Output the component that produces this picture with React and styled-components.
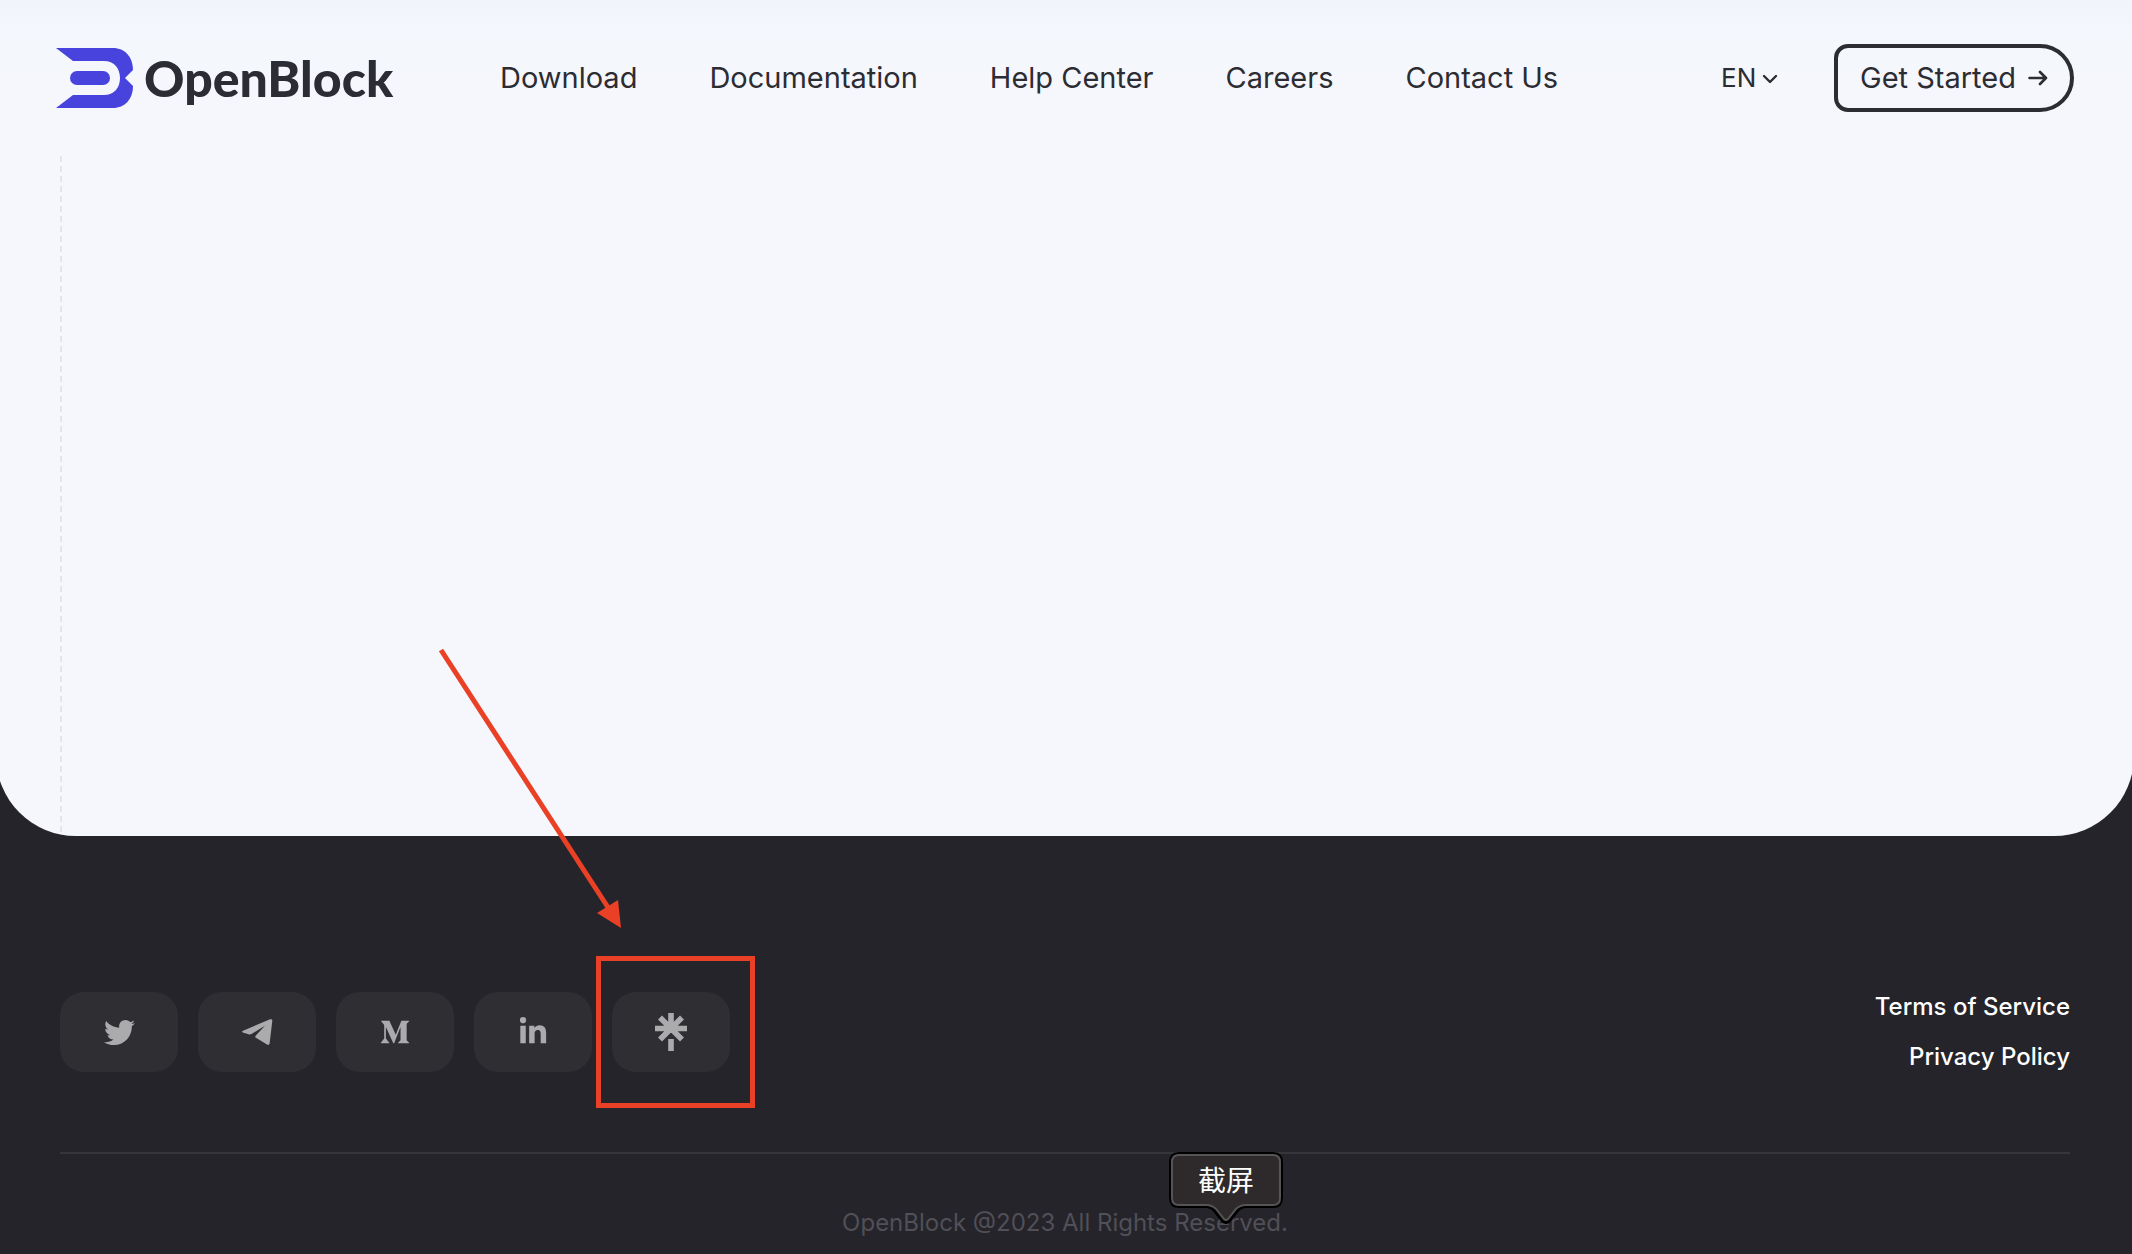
import React from 'react';
import styled, { createGlobalStyle } from 'styled-components';
import { FaTwitter, FaMediumM, FaLinkedinIn } from 'react-icons/fa';

const GlobalStyle = createGlobalStyle`
  * {
    box-sizing: border-box;
  }

  body {
    margin: 0;
    background: #25242a;
    color: #2c2c33;
    font-family: Inter, 'Noto Sans CJK SC', sans-serif;
  }
`;

const Page = styled.div`
  position: relative;
  display: flex;
  flex-direction: column;
  min-height: 100vh;
  overflow: hidden;
`;

const Panel = styled.div`
  flex: 1;
  display: flex;
  flex-direction: column;
  margin: 0 -2px 0 -4px;
  padding: 0 2px 0 4px;
  border-radius: 0 0 80px 80px;
  background: #f6f7fc;
  overflow: hidden;
`;

const Header = styled.header`
  display: flex;
  align-items: center;
  height: 156px;
  padding: 0 58px 0 56px;
  background: linear-gradient(#f1f4fa, #f4f7fc 40px, #f6f7fc 120px);
`;

const Logo = styled.a`
  display: flex;
  align-items: center;
  gap: 10px;
  width: 444px;
  color: #2c2c35;
  font-family: Lato, sans-serif;
  font-size: 50px;
  font-weight: 900;
  line-height: 60px;
  text-decoration: none;
`;

const Nav = styled.nav`
  display: flex;
  gap: 72px;
`;

const NavLink = styled.a`
  color: #2c2c33;
  font-size: 29px;
  line-height: 40px;
  text-decoration: none;
  white-space: nowrap;
`;

const Actions = styled.div`
  display: flex;
  align-items: center;
  gap: 56px;
  margin-left: auto;
`;

const Language = styled.label`
  display: flex;
  align-items: center;
`;

const LanguageSelect = styled.select`
  width: 58px;
  padding: 0;
  border: 0;
  appearance: none;
  background: transparent;
  color: #2c2c33;
  font-family: inherit;
  font-size: 26px;
  line-height: 40px;
`;

const Chevron = styled.svg`
  width: 16px;
  height: 10px;
  margin-left: -17px;
  margin-top: 2px;
  pointer-events: none;
`;

const StartButton = styled.button`
  display: flex;
  align-items: center;
  gap: 12px;
  height: 68px;
  padding: 0 22px;
  border: 4px solid #2c2c33;
  border-radius: 14px 34px 34px 14px;
  background: transparent;
  color: #2c2c33;
  font-family: inherit;
  font-size: 29px;
  line-height: 40px;
  white-space: nowrap;
`;

const Main = styled.main`
  flex: 1;
  display: flex;
  padding-left: 60px;
`;

const Guide = styled.div`
  width: 2px;
  background: repeating-linear-gradient(#e4e4ea 0 6px, transparent 6px 10px);
`;

const Footer = styled.footer`
  padding: 146px 62px 13px 60px;
`;

const FooterRow = styled.div`
  display: flex;
  align-items: center;
  justify-content: space-between;
`;

const Socials = styled.div`
  display: flex;
  gap: 20px;
`;

const SocialLink = styled.a`
  position: relative;
  display: flex;
  align-items: center;
  justify-content: center;
  width: 118px;
  height: 80px;
  border-radius: 24px;
  background: #2f2e33;
  color: #ababae;
  font-size: 30px;
`;

const Legal = styled.div`
  display: flex;
  flex-direction: column;
  align-items: flex-end;
`;

const LegalLink = styled.a`
  color: #fff;
  font-size: 24px;
  font-weight: 500;
  line-height: 50px;
  text-decoration: none;
`;

const Divider = styled.hr`
  height: 2px;
  margin: 70px 0 51px;
  border: 0;
  background: #36353b;
`;

const Copyright = styled.p`
  position: relative;
  width: fit-content;
  margin: 0 auto;
  color: #514f57;
  font-size: 24px;
  line-height: 36px;
`;

const Marker = styled.div`
  position: absolute;
  top: -36px;
  left: -16px;
  width: 159px;
  height: 152px;
  border: 5px solid #ea4025;
  pointer-events: none;
`;

const Arrow = styled.svg`
  position: absolute;
  top: -344px;
  left: -173px;
  width: 186px;
  height: 284px;
  pointer-events: none;
`;

const Tooltip = styled.div`
  position: absolute;
  right: 5px;
  bottom: 17px;
  width: 114px;
  height: 72px;
  color: #fff;
  font-family: 'Noto Sans CJK SC', sans-serif;
  font-size: 28px;
  line-height: 54px;
  text-align: center;
`;

const TooltipShape = styled.svg`
  position: absolute;
  inset: 0;
`;

const TooltipText = styled.span`
  position: relative;
`;

const LogoMark = () => (
  <svg width="78" height="60" viewBox="0 0 78 60" fill="#4843dc" aria-hidden="true">
    <path d="M0 0H57C69 0 77 9 77 22L69 30L77 38C77 51 69 60 57 60H0L17 47H48C58 47 64 40 64 30C64 20 58 13 48 13H17Z" />
    <rect x="14" y="23" width="40" height="14" rx="7" />
  </svg>
);

const RightArrow = () => (
  <svg width="20" height="16" viewBox="0 0 20 16" fill="none" stroke="currentColor" strokeWidth="2.6" strokeLinecap="round" strokeLinejoin="round" aria-hidden="true">
    <path d="M1.5 8H18M12 2L18 8L12 14" />
  </svg>
);

const TelegramIcon = () => (
  <svg width="31" height="27" viewBox="0 0 31 27" fill="currentColor" aria-hidden="true">
    <path d="M0.5 12L28 0.3Q30.6 -0.3 30.3 2L27.6 24.5Q27 26.5 25 25.6L13.5 18.5Q13 17.5 13.6 16.7L23 6.8L9.5 15Q8 15.8 6.5 15.3L0.8 13.5Q-0.3 12.7 0.5 12Z" />
  </svg>
);

const LinktreeIcon = () => (
  <svg width="32" height="38" viewBox="0 0 32 38" fill="none" stroke="currentColor" strokeWidth="5.6" aria-hidden="true">
    <path d="M16 0V20M0 15.5H32M5 4.5L16 15.5L27 4.5M5 26.5L16 15.5L27 26.5M16 26V38" />
  </svg>
);

const navItems = ['Download', 'Documentation', 'Help Center', 'Careers', 'Contact Us'];

const App = () => {
  return (
    <>
      <GlobalStyle />
      <Page>
        <Panel>
          <Header>
            <Logo href="#">
              <LogoMark />
              OpenBlock
            </Logo>
            <Nav>
              {navItems.map((item) => (
                <NavLink key={item} href="#">{item}</NavLink>
              ))}
            </Nav>
            <Actions>
              <Language>
                <LanguageSelect aria-label="Language" defaultValue="EN">
                  <option>EN</option>
                </LanguageSelect>
                <Chevron viewBox="0 0 16 10" fill="none" stroke="currentColor" strokeWidth="2.4" strokeLinecap="round" strokeLinejoin="round">
                  <path d="M2 2L8 8L14 2" />
                </Chevron>
              </Language>
              <StartButton type="button">
                Get Started
                <RightArrow />
              </StartButton>
            </Actions>
          </Header>
          <Main>
            <Guide />
          </Main>
        </Panel>
        <Footer>
          <FooterRow>
            <Socials>
              <SocialLink href="#" aria-label="Twitter"><FaTwitter size={31} /></SocialLink>
              <SocialLink href="#" aria-label="Telegram"><TelegramIcon /></SocialLink>
              <SocialLink href="#" aria-label="Medium"><FaMediumM /></SocialLink>
              <SocialLink href="#" aria-label="LinkedIn"><FaLinkedinIn /></SocialLink>
              <SocialLink href="#" aria-label="Linktree">
                <LinktreeIcon />
                <Marker />
                <Arrow viewBox="0 0 186 284">
                  <path d="M2 2L172 264" stroke="#ea4025" strokeWidth="5" />
                  <path d="M182 280L158 265L179 252Z" fill="#ea4025" />
                </Arrow>
              </SocialLink>
            </Socials>
            <Legal>
              <LegalLink href="#">Terms of Service</LegalLink>
              <LegalLink href="#">Privacy Policy</LegalLink>
            </Legal>
          </FooterRow>
          <Divider />
          <Copyright>
            OpenBlock @2023 All Rights Reserved.
            <Tooltip role="tooltip">
              <TooltipShape width="114" height="72" viewBox="0 0 114 72">
                <path
                  d="M10 1H104Q113 1 113 10V46Q113 55 104 55H77Q72 55 69 59L61 69Q57 73 53 69L45 59Q42 55 37 55H10Q1 55 1 46V10Q1 1 10 1Z"
                  fill="#000"
                  stroke="#000"
                  strokeWidth="2"
                />
                <path
                  d="M10 3H104Q111 3 111 10V46Q111 53 104 53H77Q71 53 67 57L59 67Q57 69 55 67L47 57Q43 53 37 53H10Q3 53 3 46V10Q3 3 10 3Z"
                  fill="#2e2a2c"
                  stroke="#565455"
                  strokeWidth="2"
                />
              </TooltipShape>
              <TooltipText>截屏</TooltipText>
            </Tooltip>
          </Copyright>
        </Footer>
      </Page>
    </>
  );
};

export default App;
